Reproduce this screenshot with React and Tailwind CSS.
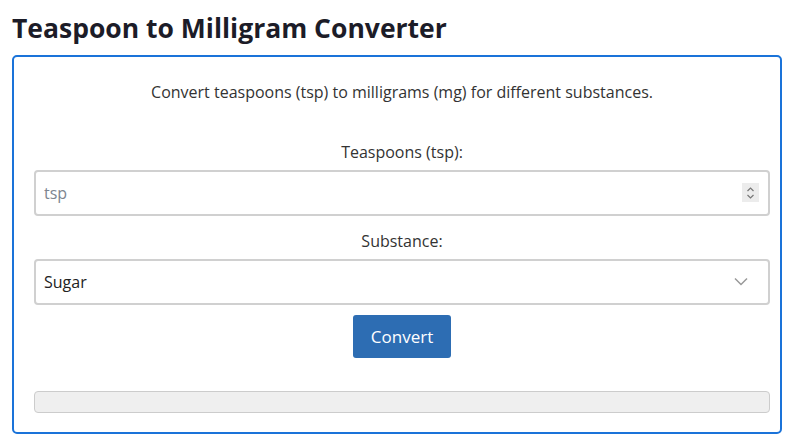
export default function App() {
  return (
    <div className="bg-white px-3 pt-1 text-[#333]" style={{ fontFamily: '"Open Sans", "Noto Sans", sans-serif' }}>
      <h1 className="m-0 text-[26.5px] font-bold leading-[48px] text-[#1c1c28]">Teaspoon to Milligram Converter</h1>

      {/* Converter card */}
      <div className="mt-[3px] rounded-[5px] border-2 border-[#1a73d9] pt-[21px] pr-[10px] pb-[19px] pl-[20px]">
        <p className="text-center text-[16px] leading-[28px]">Convert teaspoons (tsp) to milligrams (mg) for different substances.</p>

        <label className="mt-[35px] block text-center text-[16px] leading-[22px]">Teaspoons (tsp):</label>
        <div className="relative mt-[7px]">
          <input
            type="text"
            placeholder="tsp"
            className="block h-[46px] w-full rounded-[4px] border-2 border-[#d0d0d0] px-2 text-[16px] text-[#333] placeholder:text-[#7d8590] outline-none"
          />
          <div className="absolute right-[11px] top-[13px] flex h-[19px] w-[17px] flex-col items-center justify-center bg-[#ececec]">
            <svg width="9" height="14" viewBox="0 0 9 14" fill="none" stroke="#777" strokeWidth="1.2">
              <path d="M1.5 5 L4.5 2 L7.5 5" />
              <path d="M1.5 9 L4.5 12 L7.5 9" />
            </svg>
          </div>
        </div>

        <label className="mt-[14px] block text-center text-[16px] leading-[22px]">Substance:</label>
        <div className="relative mt-[7px]">
          <select className="block h-[46px] w-full appearance-none rounded-[4px] border-2 border-[#d0d0d0] bg-white px-2 text-[16px] text-[#222] outline-none">
            <option>Sugar</option>
            <option>Salt</option>
            <option>Flour</option>
          </select>
          <svg className="pointer-events-none absolute right-[22px] top-[18px]" width="14" height="9" viewBox="0 0 14 9" fill="none" stroke="#999" strokeWidth="1.5">
            <path d="M1 1.5 L7 7.5 L13 1.5" />
          </svg>
        </div>

        <div className="mt-[10px] flex justify-center">
          <button className="h-[43px] w-[98px] rounded-[3px] bg-[#2d6db3] text-[17px] text-white">Convert</button>
        </div>

        <div className="mt-[33px] h-[22px] rounded-[4px] border border-[#cccccc] bg-[#efefef]" />
      </div>
    </div>
  );
}
